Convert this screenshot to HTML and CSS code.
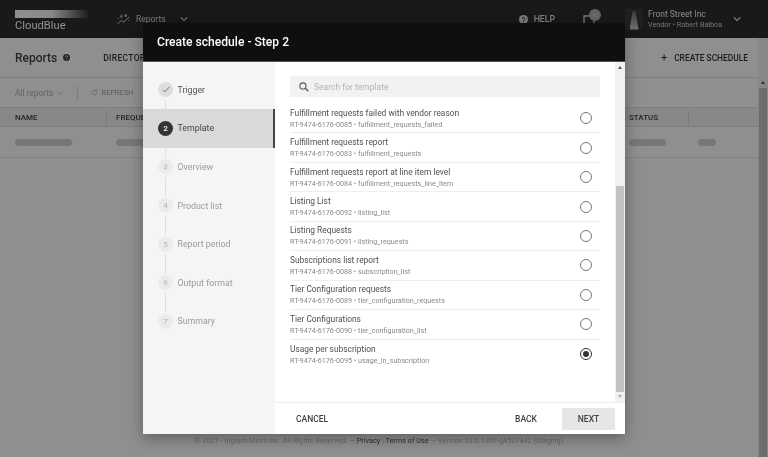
FILE: index.html
```html
<!DOCTYPE html>
<html lang="en">
<head>
<meta charset="utf-8">
<title>Reports</title>
<link rel="stylesheet" href="styles.css">
</head>
<body>
<div class="page">
  <header class="topbar">
    <div class="logo">
      <div class="logo-bar"></div>
      <div class="logo-text">CloudBlue</div>
    </div>
    <nav class="module">
      <svg class="module-icon" viewBox="0 0 16 14"><path d="M1 12l4-4 3 2 6-6M4 4l1-2 1 2-1 1zM9 3l1-2 1 2-1 1zM1 6h1M13 8h1" fill="none" stroke="currentColor" stroke-width="1.1"/></svg>
      <span>Reports</span>
      <svg class="chev module-chev" viewBox="0 0 10 6"><path d="M1 1l4 4 4-4" fill="none" stroke="currentColor" stroke-width="1.3"/></svg>
    </nav>
    <div class="top-right">
      <div class="help">
        <svg class="help-icon" viewBox="0 0 10 10"><circle cx="5" cy="5" r="5" fill="currentColor"/><path d="M3.500 4a1.500 1.400 0 1 1 2.200 1.200C5.200 5.500 5 5.700 5 6.200M5 7.200v1" fill="none" stroke="#1a1a1a" stroke-width="1"/></svg>
        <span>HELP</span>
      </div>
      <div class="notif">
        <svg class="notif-icon" viewBox="0 0 12 11"><path d="M7 1H1v8h2.500M8.500 9H11V5" fill="none" stroke="currentColor" stroke-width="1.300"/><path d="M4 9h4l1 1.500H3z" fill="currentColor"/></svg>
        <span class="badge">40</span>
      </div>
      <div class="avatar"><div class="avatar-figure"></div></div>
      <div class="account">
        <div class="account-name">Front Street Inc</div>
        <div class="account-sub">Vendor • Robert Balboa</div>
      </div>
      <svg class="chev" viewBox="0 0 10 6"><path d="M1 1l4 4 4-4" fill="none" stroke="currentColor" stroke-width="1.3"/></svg>
    </div>
  </header>

  <div class="main">
    <section class="content">
      <div class="subheader">
        <h1>Reports</h1>
        <svg class="sub-help" viewBox="0 0 10 10"><circle cx="5" cy="5" r="5" fill="currentColor"/><path d="M3.500 4a1.500 1.400 0 1 1 2.200 1.200C5.200 5.500 5 5.700 5 6.200M5 7.200v1" fill="none" stroke="#fff" stroke-width="1"/></svg>
        <span class="tab">DIRECTORY</span>
        <span class="create"><b>+</b>CREATE SCHEDULE</span>
      </div>
      <div class="toolbar">
        <span>All reports</span>
        <svg class="tool-chev" viewBox="0 0 10 6"><path d="M1 1l4 4 4-4" fill="none" stroke="currentColor" stroke-width="1.300"/></svg>
        <span class="divider"></span>
        <svg class="refresh-icon" viewBox="0 0 10 10"><path d="M8.500 5A3.500 3.500 0 1 1 7.400 2.500M8 .8v2.400H5.600" fill="none" stroke="currentColor" stroke-width="1.100"/></svg>
        <span class="refresh">REFRESH</span>
      </div>
      <div class="thead">
        <span class="col-name">NAME</span>
        <span class="col-freq">FREQUENCY</span>
        <span class="col-status">STATUS</span>
      </div>
      <div class="trow">
        <span class="pill pill-name"></span>
        <span class="pill pill-freq"></span>
        <span class="pill pill-status"></span>
        <span class="pill pill-last"></span>
      </div>
      <footer class="legal">© 2021 - Ingram Micro Inc. All Rights Reserved. — <b>Privacy</b> | <b>Terms of Use</b> — Version 23.0.1207-g4527a42 (Staging)</footer>
    </section>
    <div class="page-scroll"><i class="up"></i><div class="page-thumb"></div></div>
  </div>
</div>

<div class="overlay">
  <div class="modal">
    <div class="modal-head">Create schedule - Step 2</div>
    <div class="modal-body">
      <aside class="steps">
        <div class="step done"><span class="num"><svg viewBox="0 0 10 8"><path d="M1 4.500l2.500 2.500L9 1" fill="none" stroke="currentColor" stroke-width="1"/></svg></span><span>Trigger</span></div>
        <div class="step active"><span class="num">2</span><span>Template</span></div>
        <div class="step"><span class="num">3</span><span>Overview</span></div>
        <div class="step"><span class="num">4</span><span>Product list</span></div>
        <div class="step"><span class="num">5</span><span>Report period</span></div>
        <div class="step"><span class="num">6</span><span>Output format</span></div>
        <div class="step last"><span class="num">7</span><span>Summary</span></div>
      </aside>
      <div class="panel">
        <div class="panel-main">
          <div class="panel-scroll">
            <div class="search">
              <svg viewBox="0 0 14 14"><circle cx="5.500" cy="5.500" r="4.300" fill="none" stroke="currentColor" stroke-width="1.500"/><path d="M8.500 8.500l4.500 4.500" stroke="currentColor" stroke-width="1.800"/></svg>
              <span>Search for template</span>
            </div>
            <ul class="list">
              <li><div><div class="t">Fulfillment requests failed with vendor reason</div><div class="s">RT-9474-6176-0085 • fulfillment_requests_failed</div></div><span class="radio"></span></li>
              <li><div><div class="t">Fulfillment requests report</div><div class="s">RT-9474-6176-0083 • fulfillment_requests</div></div><span class="radio"></span></li>
              <li><div><div class="t">Fulfillment requests report at line item level</div><div class="s">RT-9474-6176-0084 • fulfillment_requests_line_item</div></div><span class="radio"></span></li>
              <li><div><div class="t">Listing List</div><div class="s">RT-9474-6176-0092 • listing_list</div></div><span class="radio"></span></li>
              <li><div><div class="t">Listing Requests</div><div class="s">RT-9474-6176-0091 • listing_requests</div></div><span class="radio"></span></li>
              <li><div><div class="t">Subscriptions list report</div><div class="s">RT-9474-6176-0088 • subscription_list</div></div><span class="radio"></span></li>
              <li><div><div class="t">Tier Configuration requests</div><div class="s">RT-9474-6176-0089 • tier_configuration_requests</div></div><span class="radio"></span></li>
              <li><div><div class="t">Tier Configurations</div><div class="s">RT-9474-6176-0090 • tier_configuration_list</div></div><span class="radio"></span></li>
              <li><div><div class="t">Usage per subscription</div><div class="s">RT-9474-6176-0095 • usage_in_subscription</div></div><span class="radio on"></span></li>
            </ul>
          </div>
          <div class="scrollbar"><i class="up"></i><div class="thumb"></div><i class="down"></i></div>
        </div>
        <div class="modal-foot">
          <button class="btn cancel">CANCEL</button>
          <button class="btn back">BACK</button>
          <button class="btn next">NEXT</button>
        </div>
      </div>
    </div>
  </div>
</div>
</body>
</html>
```
FILE: styles.css
```css
* { box-sizing: border-box; }
html, body { margin: 0; height: 100%; overflow: hidden; }
body { font-family: Roboto, "Liberation Sans", sans-serif; color: #212121; background: #fff; filter: blur(.4px); }
.page { height: 457px; display: flex; flex-direction: column; }

.topbar { height: 38px; background: #2e2e2e; color: #fff; display: flex; align-items: center; padding-left: 15px; flex: none; }
.logo { width: 73px; display: flex; flex-direction: column; gap: 1px; margin-top: 4px; }
.logo-bar { height: 8px; width: 73px; background: linear-gradient(90deg, #fff, #f4f4f4 50%, #3a3a3a); }
.logo-text { font-size: 11.200px; line-height: 14px; color: #fff; }
.module { margin-left: 29px; display: flex; align-items: center; font-size: 8.500px; color: #d8d8d8; }
.module-icon { width: 14px; height: 13px; margin-right: 5px; }
.module-chev { margin-left: 14px; width: 7px; }
.chev { width: 8px; height: 6px; }
.top-right { margin-left: auto; display: flex; align-items: center; padding-right: 27px; }
.help { display: flex; align-items: center; gap: 6px; font-size: 8.700px; font-weight: 500; color: #e0e0e0; margin-right: 28px; }
.help-icon { width: 9px; height: 9px; }
.notif { width: 18px; height: 20px; position: relative; color: #e0e0e0; margin-right: 24px; }
.notif-icon { width: 12px; height: 11px; position: absolute; left: 0; top: 6px; }
.badge { position: absolute; left: 6px; top: 0; width: 12px; height: 12px; border-radius: 50%; background: #b0b0b0; color: #ddd; font-size: 5px; line-height: 12px; text-align: center; }
.avatar { width: 18px; height: 21px; background: #383838; margin-right: 5px; display: flex; justify-content: center; align-items: flex-end; }
.avatar-figure { width: 9px; height: 19px; background: linear-gradient(#666, #ccc); clip-path: polygon(35% 0, 65% 0, 100% 100%, 0 100%); }
.account { width: 85px; }
.account-name { font-size: 8.500px; line-height: 11px; color: #f0f0f0; }
.account-sub { font-size: 7.200px; line-height: 10px; color: #cfcfcf; }

.main { flex: 1; display: flex; min-height: 0; }
.content { flex: 1; display: flex; flex-direction: column; min-width: 0; background: #fff; }
.subheader { height: 40px; padding: 0 10px 0 15px; display: flex; align-items: center; border-bottom: 1px solid #e0e0e0; }
.subheader h1 { margin: 0; font-size: 12px; font-weight: 500; color: #444; }
.sub-help { width: 7px; height: 7px; margin-left: 6px; color: #444; }
.tab { margin-left: 33px; font-size: 8.500px; font-weight: 500; letter-spacing: .3px; color: #333; }
.create { margin-left: auto; font-size: 8.400px; font-weight: 500; color: #333; }
.create b { font-weight: 400; font-size: 11px; margin-right: 7px; }
.toolbar { height: 29px; padding-left: 15px; display: flex; align-items: center; font-size: 8.400px; color: #b0b0b0; }
.tool-chev { width: 6px; height: 4px; margin-left: 4px; }
.divider { width: 1px; height: 14px; margin: 0 13px 0 14px; background: #ddd; }
.refresh-icon { width: 7px; height: 7px; margin-right: 3px; }
.refresh { font-size: 7.400px; font-weight: 500; letter-spacing: .1px; }
.thead { height: 20px; background: #f2f2f2; border-top: 1px solid #e0e0e0; border-bottom: 1px solid #e0e0e0; display: flex; align-items: center; font-size: 8px; font-weight: 500; color: #444; padding-left: 15px; }
.col-name { width: 101px; }
.col-freq { width: 513px; position: relative; }
.col-status { position: relative; flex: 1; }
.col-freq::before, .col-status::after { content: ""; position: absolute; top: -3px; bottom: -3px; width: 1px; background: #ddd; }
.col-freq::before { left: -10px; }
.col-status::after { left: 59px; }
.trow { height: 31px; border-bottom: 1px solid #e6e6e6; display: flex; align-items: center; padding-left: 15px; }
.pill { height: 7px; border-radius: 4px; background: #d4d4d4; }
.pill-name { width: 57px; margin-right: 44px; }
.pill-freq { width: 40px; margin-right: 473px; }
.pill-status { width: 37px; margin-right: 32px; }
.pill-last { width: 18px; }
.legal { margin-top: auto; height: 22px; font-size: 7.300px; color: #bbb; text-align: center; padding-top: 1px; }
.legal b { font-weight: 400; color: #555; }
.page-scroll { width: 10px; background: #f1f1f1; position: relative; }
.page-thumb { position: absolute; left: 1px; right: 1px; top: 50px; bottom: 0; background: #c1c1c1; }
.page-scroll .up { top: 43px; }

.overlay { position: fixed; inset: 0; background: rgba(0,0,0,.44); display: flex; justify-content: center; align-items: flex-start; padding-top: 23px; }
.modal { width: 482px; height: 411px; background: #fff; display: flex; flex-direction: column; box-shadow: 0 4px 14px rgba(0,0,0,.35); }
.modal-head { height: 39px; background: #0f0f0f; color: #fff; font-size: 12.100px; font-weight: 500; line-height: 39px; padding-left: 14px; flex: none; border-bottom: 1px solid #555; }
.modal-body { flex: 1; display: flex; min-height: 0; }
.steps { width: 132px; background: #f5f5f5; padding-top: 8.500px; flex: none; }
.step { height: 38.600px; padding-left: 15px; display: flex; align-items: center; gap: 4.500px; font-size: 8.800px; color: #9a9a9a; position: relative; }
.step::after { content: ""; position: absolute; left: 22px; top: 29px; width: 1px; height: 20px; background: #e0e0e0; }
.step.last::after { display: none; }
.step.done { color: #555; }
.step.active { background: #d9d9d9; color: #444; box-shadow: inset -2px 0 0 #444; }
.num { width: 15px; height: 15px; border-radius: 50%; background: #ebebeb; font-size: 8px; font-weight: 500; color: #bbb; display: flex; align-items: center; justify-content: center; position: relative; z-index: 1; }
.done .num { background: #dedede; color: #555; }
.done .num svg { width: 8px; height: 7px; }
.active .num { background: #333; color: #fff; }

.panel { flex: 1; display: flex; flex-direction: column; min-width: 0; }
.panel-main { flex: 1; display: flex; min-height: 0; border-bottom: 1px solid #eee; }
.panel-scroll { flex: 1; padding: 14px 15px 0; min-width: 0; }
.search { height: 21px; background: #f2f2f2; display: flex; align-items: center; padding-left: 9px; font-size: 8.500px; color: #b4b4b4; gap: 5px; }
.search svg { width: 10px; height: 10px; color: #555; }
.list { list-style: none; margin: 7px 0 0; padding: 0; }
.list li { height: 29.450px; display: flex; align-items: center; justify-content: space-between; border-bottom: 1px solid #eee; padding-right: 8px; }
.list li:last-child { border-bottom: 0; }
.t { font-size: 8.400px; line-height: 12px; color: #505050; }
.s { font-size: 7.200px; line-height: 11px; color: #8a8a8a; }
.radio { width: 12px; height: 12px; border-radius: 50%; border: 1px solid #777; display: block; flex: none; }
.radio.on { border-color: #333; position: relative; }
.radio.on::after { content: ""; position: absolute; inset: 2px; border-radius: 50%; background: #333; }
.scrollbar { width: 10px; background: #f1f1f1; position: relative; flex: none; }
.thumb { position: absolute; left: 1px; right: 1px; top: 124px; bottom: 10px; background: #c1c1c1; }
.up, .down { position: absolute; left: 3px; width: 0; height: 0; border-left: 2px solid transparent; border-right: 2px solid transparent; display: block; }
.up { top: 4px; border-bottom: 3px solid #555; }
.down { bottom: 4px; border-top: 3px solid #aaa; }

.modal-foot { height: 31px; display: flex; align-items: center; padding: 0 10px 0 21px; flex: none; }
.btn { border: 0; background: none; font: 500 8.500px Roboto, "Liberation Sans", sans-serif; color: #444; padding: 0; height: 22px; }
.cancel { text-align: left; }
.back { margin-left: auto; width: 46px; margin-right: 13px; }
.next { width: 53px; background: #e6e6e6; }
```
